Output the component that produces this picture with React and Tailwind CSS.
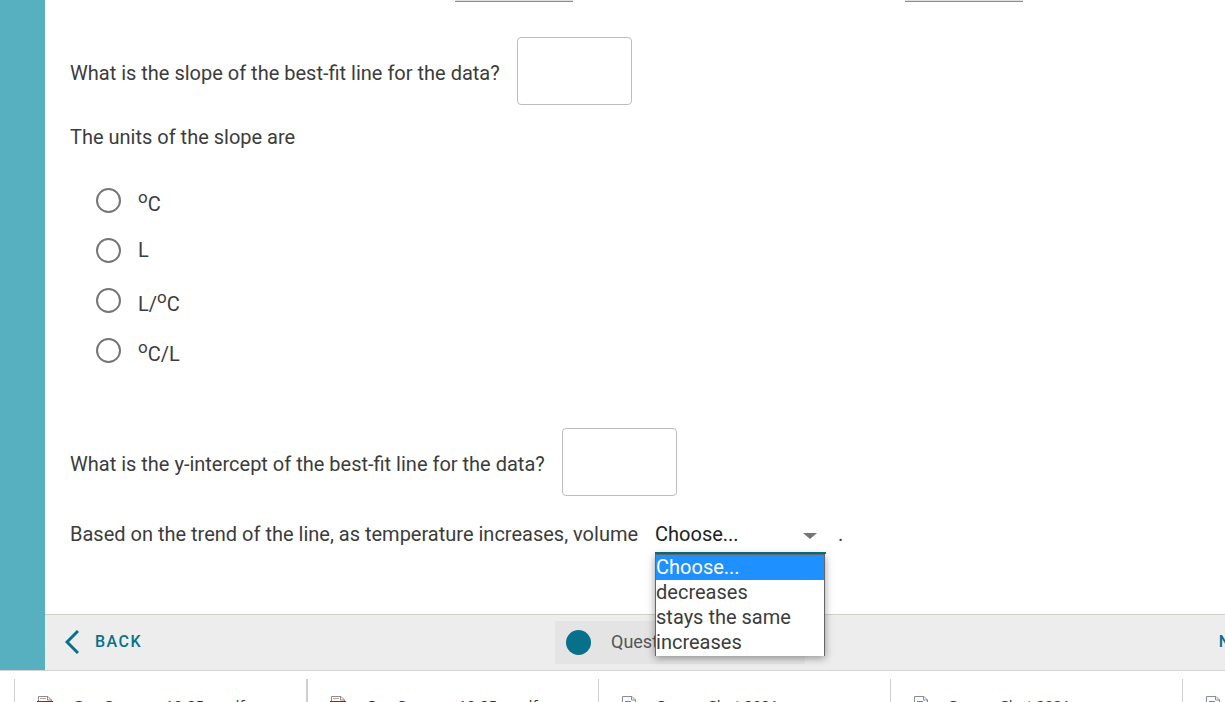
import { useState } from "react";

const TRENDS = ["Choose...", "decreases", "stays the same", "increases"];

const DOWNLOADS = [
  { kind: "pdf", name: "CamScanner 10-25-...pdf" },
  { kind: "pdf", name: "CamScanner 10-25-...pdf" },
  { kind: "image", name: "Screen Shot 2021-...png" },
  { kind: "image", name: "Screen Shot 2021-...png" },
  { kind: "image", name: "Screen Shot 2021-...png" },
];

function Degree() {
  return <sup className="static align-super text-[17px] leading-6">o</sup>;
}

const UNITS = [
  { id: "c", label: <><Degree />C</> },
  { id: "l", label: "L" },
  { id: "l-per-c", label: <>L/<Degree />C</> },
  { id: "c-per-l", label: <><Degree />C/L</> },
];

function FileIcon({ kind }) {
  return (
    <svg width="16" height="18" viewBox="0 0 16 18" fill="none" className="shrink-0" aria-hidden="true">
      <path d="M1.5 17.5V.5H11l3.500 3.500V17.500Z" fill="#fff" stroke="#8c8c8c" />
      <path d="M10.500 .5V4H14.500" stroke="#8c8c8c" />
      {kind === "pdf" ? (
        <>
          <path d="M3 2.500H9" stroke="#aaa" />
          <path d="M0 5H16V11H0Z" fill="#b5121f" />
        </>
      ) : (
        <path d="M4 5H10V7H12V9H4Z" fill="#2f9bd6" />
      )}
    </svg>
  );
}

function AnswerRow({ id, children }) {
  return (
    <div className="flex items-center gap-[17px]">
      <label htmlFor={id} className="pt-1">{children}</label>
      <input id={id} type="text" className="h-[68px] w-[115px] rounded border border-[#bdbdbd] bg-white px-3 outline-none" />
    </div>
  );
}

export default function App() {
  const [trend, setTrend] = useState(TRENDS[0]);
  const [unit, setUnit] = useState("");

  return (
    <div className="flex h-screen flex-col overflow-hidden bg-white font-['Roboto',sans-serif] text-xl leading-6 text-[#3c3c3c]">
      <div className="flex min-h-0 flex-1">
        <aside className="w-[45px] shrink-0 bg-[#56b0bf]" />
        <div className="flex min-w-0 flex-1 flex-col">
          <main className="flex-1 px-[25px]">
            <div className="flex gap-[332px] pl-[385px]">
              <div className="h-0.5 w-[118px] border-b border-[#8c8c8c] bg-[#e0e0e0]" />
              <div className="h-0.5 w-[118px] border-b border-[#8c8c8c] bg-[#e0e0e0]" />
            </div>
            <div className="pt-[35px]">
              <AnswerRow id="slope">What is the slope of the best-fit line for the data?</AnswerRow>
            </div>
            <fieldset className="pt-5">
              <legend className="float-left w-full">The units of the slope are</legend>
              <div className="clear-both flex flex-col pt-[26px] pl-[26px]">
                {UNITS.map((u) => (
                  <label key={u.id} className="flex h-[50px] items-center gap-[17px]">
                    <input
                      type="radio"
                      name="unit"
                      checked={unit === u.id}
                      onChange={() => setUnit(u.id)}
                      className="size-[25px] shrink-0 appearance-none rounded-full border-2 border-[#757575] checked:border-8 checked:border-[#07718c]"
                    />
                    <span>{u.label}</span>
                  </label>
                ))}
              </div>
            </fieldset>
            <div className="pt-[53px]">
              <AnswerRow id="intercept">What is the y-intercept of the best-fit line for the data?</AnswerRow>
            </div>
            <div className="flex items-start pt-[22px]">
              <label htmlFor="trend" className="pt-1">Based on the trend of the line, as temperature increases, volume</label>
              <div className="relative ml-[17px] w-[171px]">
                <select
                  id="trend"
                  value={trend}
                  onChange={(e) => setTrend(e.target.value)}
                  className="block h-9 w-full appearance-none border-b-2 border-[#07718c] bg-transparent pb-0.5 leading-6 text-[#212121] outline-none"
                >
                  {TRENDS.map((t) => <option key={t}>{t}</option>)}
                </select>
                <svg width="14" height="6" viewBox="0 0 14 6" className="pointer-events-none absolute top-[15px] right-[9px]" aria-hidden="true">
                  <path d="M0 0H14L7 6Z" fill="#757575" />
                </svg>
                <ul role="listbox" aria-label="Trend" className="absolute top-full left-0 z-10 w-[170px] border-x border-t border-[#666] bg-white pb-px shadow-[0_2px_8px_rgba(0,0,0,0.4)]">
                  {TRENDS.map((t) => (
                    <li
                      key={t}
                      role="option"
                      aria-selected={t === trend}
                      onClick={() => setTrend(t)}
                      className="h-[25px] leading-[25px] aria-selected:bg-[#1e90ff] aria-selected:text-white"
                    >
                      {t}
                    </li>
                  ))}
                </ul>
              </div>
              <span className="pt-1 pl-3">.</span>
            </div>
          </main>
          <footer className="grid h-14 w-[calc(100%+90px)] shrink-0 grid-cols-[1fr_250px_1fr] items-center border-t border-[#d0d0c8] bg-[#ededed] text-base font-medium tracking-[1.5px] text-[#07718c]">
            <button type="button" className="flex items-center gap-4 justify-self-start pb-0.5 pl-5">
              <svg width="14" height="24" viewBox="0 0 14 24" fill="none" aria-hidden="true">
                <path d="M13 1L2 12L13 23" stroke="#07718c" strokeWidth="3" />
              </svg>
              BACK
            </button>
            <div className="flex h-[43px] items-center gap-5 bg-[#e4e4e4] pl-[11px] text-lg font-normal tracking-normal text-[#555]">
              <span className="size-[25px] rounded-full bg-[#07718c]" />
              <span className="pb-0.5">Question 4 of 5</span>
            </div>
            <button type="button" className="flex items-center gap-4 justify-self-end pr-5 pb-0.5">
              NEXT
              <svg width="14" height="24" viewBox="0 0 14 24" fill="none" aria-hidden="true">
                <path d="M1 1L12 12L1 23" stroke="#07718c" strokeWidth="3" />
              </svg>
            </button>
          </footer>
        </div>
      </div>
      <div className="flex h-8 shrink-0 overflow-hidden border-t border-[#d4d4d4] pt-2 pl-[14px] font-['Open_Sans',sans-serif] text-[15px] leading-[18px] text-[#333]">
        {DOWNLOADS.map((d, i) => (
          <button key={i} type="button" className="flex h-10 w-[292px] shrink-0 items-start gap-5 border-l border-[#cfcfcf] pt-[17px] pl-[22px] whitespace-nowrap nth-2:border-l-2">
            <FileIcon kind={d.kind} />
            <span>{d.name}</span>
          </button>
        ))}
      </div>
    </div>
  );
}
